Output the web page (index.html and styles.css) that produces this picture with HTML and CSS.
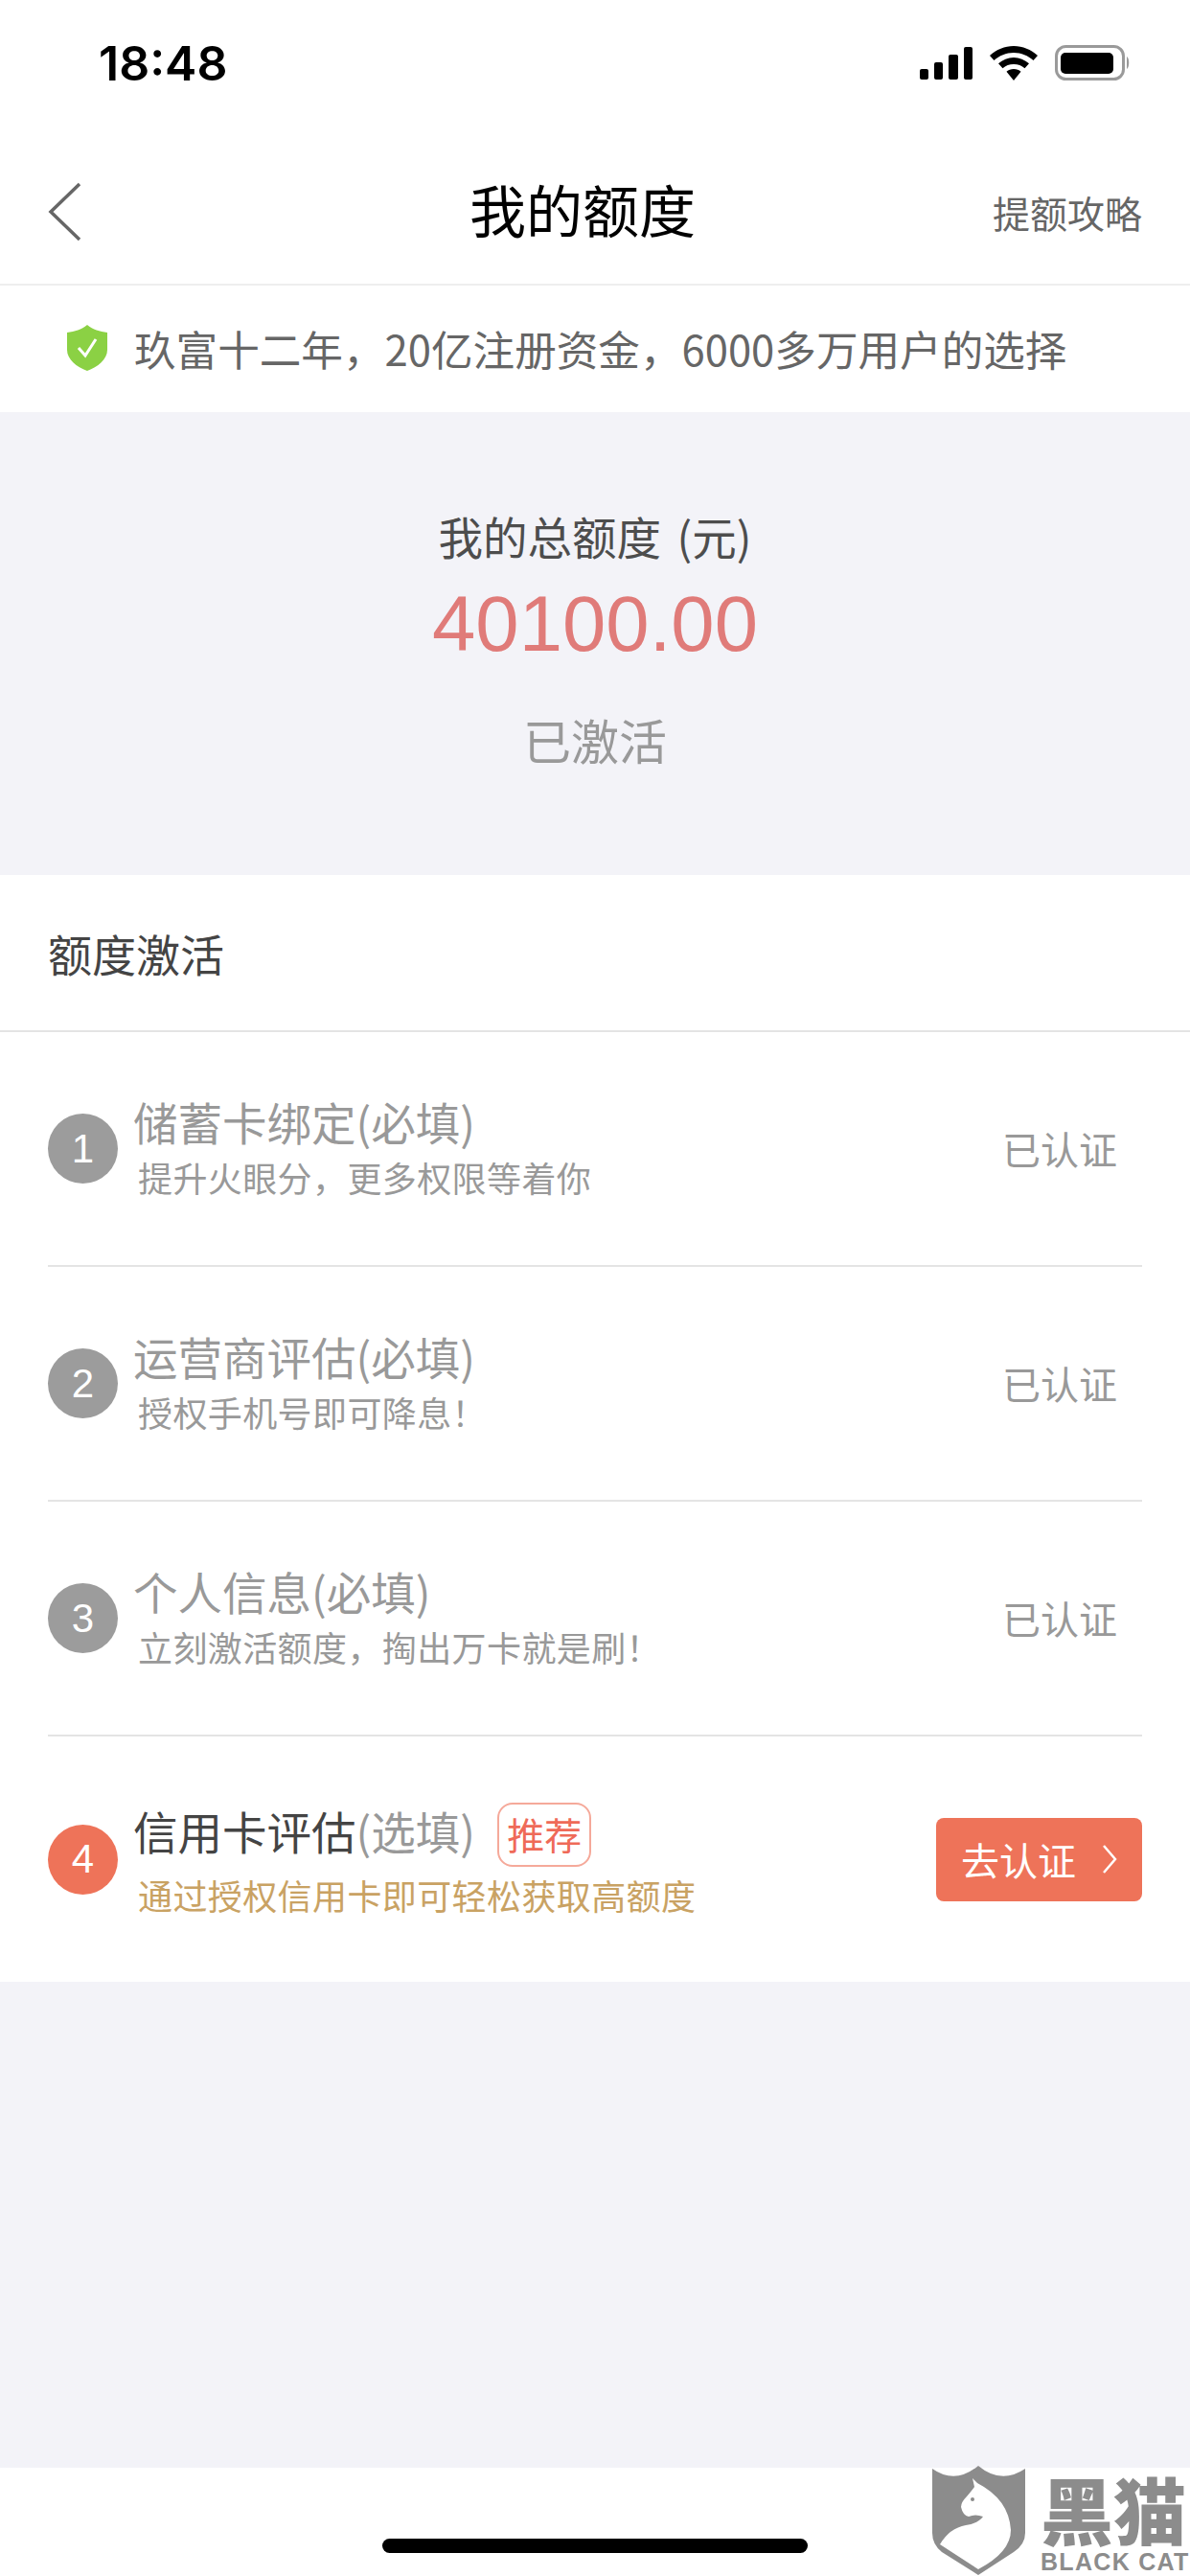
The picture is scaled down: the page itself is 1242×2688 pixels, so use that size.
FILE: index.html
```html
<!DOCTYPE html>
<html lang="zh-CN">
<head>
    <meta charset="UTF-8">
    <meta name="viewport" content="width=device-width, initial-scale=1.0">
    <title>我的额度</title>
    <link rel="stylesheet" href="styles.css">
</head>
<body>

<div class="status-bar">
    <span class="time">18:48</span>
    <div class="status-icons">
        <svg width="55" height="34" viewBox="0 0 55 34">
            <rect x="0" y="23" width="9" height="11" rx="2" fill="#000"/>
            <rect x="15" y="16" width="9" height="18" rx="2" fill="#000"/>
            <rect x="30" y="8" width="10" height="26" rx="2" fill="#000"/>
            <rect x="46" y="0" width="9" height="34" rx="2" fill="#000"/>
        </svg>
        <svg width="50" height="36" viewBox="0 0 50 36">
            <path d="M25 0C15.500 0 7 3.700 0 10L4.500 15C10 10 17 7 25 7S40 10 45.500 15L50 10C43 3.700 34.500 0 25 0Z" fill="#000"/>
            <path d="M25 12C19 12 13.500 14.300 9 18.300L13.500 23.300C16.500 20.500 20.500 19 25 19S33.500 20.500 36.500 23.300L41 18.300C36.500 14.300 31 12 25 12Z" fill="#000"/>
            <path d="M25 24C22 24 19.500 25 17.500 26.800L25 36L32.500 26.800C30.500 25 28 24 25 24Z" fill="#000"/>
        </svg>
        <svg width="79" height="37" viewBox="0 0 79 37">
            <rect x="1.500" y="1.500" width="70" height="34" rx="10" fill="none" stroke="#9a9a9a" stroke-width="3"/>
            <rect x="6" y="8" width="55" height="22" rx="5" fill="#000"/>
            <path d="M75 12C78 14 78 23 75 25Z" fill="#9a9a9a"/>
        </svg>
    </div>
</div>

<div class="nav">
    <svg class="back" width="35" height="62" viewBox="0 0 35 62">
        <path d="M33 2L3 31L33 60" fill="none" stroke="#666" stroke-width="3.500"/>
    </svg>
    <h1 class="nav-title">我的额度</h1>
    <span class="nav-link">提额攻略</span>
</div>

<div class="banner">
    <svg width="42" height="48" viewBox="0 0 42 48">
        <path d="M21 0C27 5 34 7 42 8V26C42 36 32 44 21 48C10 44 0 36 0 26V8C8 7 15 5 21 0Z" fill="#8bd144"/>
        <path d="M12 24L19 32L30 15" fill="none" stroke="#fff" stroke-width="3"/>
    </svg>
    <span>玖富十二年，20亿注册资金，6000多万用户的选择</span>
</div>

<div class="hero">
    <div class="hero-label">我的总额度 (元)</div>
    <div class="hero-amount">40100.00</div>
    <div class="hero-state">已激活</div>
</div>

<div class="panel">
    <div class="panel-title">额度激活</div>
    <div class="steps">
        <div class="step">
            <span class="step-num">1</span>
            <div class="step-text">
                <div class="step-name">储蓄卡绑定(必填)</div>
                <div class="step-desc">提升火眼分，更多权限等着你</div>
            </div>
            <span class="step-done">已认证</span>
        </div>
        <div class="step">
            <span class="step-num">2</span>
            <div class="step-text">
                <div class="step-name">运营商评估(必填)</div>
                <div class="step-desc">授权手机号即可降息！</div>
            </div>
            <span class="step-done">已认证</span>
        </div>
        <div class="step">
            <span class="step-num">3</span>
            <div class="step-text">
                <div class="step-name">个人信息(必填)</div>
                <div class="step-desc">立刻激活额度，掏出万卡就是刷！</div>
            </div>
            <span class="step-done">已认证</span>
        </div>
        <div class="step step-active">
            <span class="step-num">4</span>
            <div class="step-text">
                <div class="step-name"><b>信用卡评估</b>(选填) <span class="tag">推荐</span></div>
                <div class="step-desc">通过授权信用卡即可轻松获取高额度</div>
            </div>
            <button class="go-btn">去认证
                <svg width="16" height="30" viewBox="0 0 16 30">
                    <path d="M2 1L14 15L2 29" fill="none" stroke="#fff" stroke-width="2.500"/>
                </svg>
            </button>
        </div>
    </div>
</div>

<div class="spacer"></div>

<div class="bottom">
    <div class="home-bar"></div>
    <div class="watermark">
        <svg width="97" height="114" viewBox="0 0 97 114">
            <path d="M0 3Q24 20 48 0Q72 20 97 3V70Q97 82 85 90L48 114L10 90Q0 82 0 70Z" fill="#8c8c8c"/>
            <path d="M42 13L47 18Q80 35 82 67Q82 90 48 108L8 82Q18 65 35 62Q48 60 53 53Q45 50 38 53Q32 52 30 43Q30 38 36 32Q42 25 44 22Z" fill="#fff"/>
            <circle cx="42" cy="35" r="2" fill="#8c8c8c"/>
        </svg>
        <div class="wm-text">
            <div class="wm-cn">黑猫</div>
            <div class="wm-en">BLACK CAT</div>
        </div>
    </div>
</div>

</body>
</html>
```

FILE: styles.css
```css
* {
    box-sizing: border-box;
}
html, body {
    margin: 0;
    padding: 0;
}
body {
    width: 1242px;
    height: 2688px;
    display: flex;
    flex-direction: column;
    background-color: #f3f3f8;
    font-family: "Noto Sans CJK SC", "Liberation Sans", sans-serif;
    overflow: hidden;
}
.status-bar {
    height: 140px;
    flex: none;
    display: flex;
    justify-content: space-between;
    align-items: flex-start;
    padding: 35px 62px 0 103px;
    background-color: #fff;
}
.time {
    font-family: Inter, sans-serif;
    font-weight: 600;
    font-size: 50px;
    line-height: 62px;
    color: #000;
}
.status-icons {
    display: flex;
    align-items: center;
    gap: 18px;
    padding-top: 12px;
}
.nav {
    height: 158px;
    flex: none;
    display: flex;
    align-items: center;
    justify-content: space-between;
    padding: 0 50px;
    background-color: #fff;
    border-bottom: 2px solid #eeeeee;
    position: relative;
}
.back {
    margin-top: 6px;
}
.nav-title {
    position: absolute;
    left: 490px;
    margin: 0;
    font-size: 59px;
    font-weight: 400;
    line-height: 80px;
    color: #000;
}
.nav-link {
    margin-top: 6px;
    font-size: 39px;
    color: #666;
}
.banner {
    height: 132px;
    flex: none;
    display: flex;
    align-items: center;
    gap: 28px;
    padding-left: 70px;
    padding-bottom: 2px;
    background-color: #fff;
    font-size: 43.600px;
    color: #666;
}
.hero {
    height: 483px;
    flex: none;
    padding-top: 105px;
    text-align: center;
}
.hero-label {
    font-size: 46.500px;
    word-spacing: 6px;
    line-height: 48px;
    color: #4d4d4d;
}
.hero-amount {
    margin-top: 23px;
    font-family: "Liberation Sans", sans-serif;
    font-size: 81.500px;
    line-height: 90px;
    color: #e07b79;
}
.hero-state {
    margin-top: 47px;
    font-size: 50px;
    line-height: 56px;
    color: #999;
}
.panel {
    height: 1155px;
    flex: none;
    background-color: #fff;
}
.panel-title {
    height: 164px;
    display: flex;
    align-items: center;
    padding-left: 50px;
    font-size: 46px;
    color: #444;
    border-bottom: 2px solid #e4e4e4;
}
.steps {
    padding: 0 50px;
}
.step {
    height: 245px;
    display: flex;
    align-items: center;
    border-bottom: 2px solid #e4e4e4;
}
.step-active {
    height: 256px;
    border-bottom: none;
}
.step-num {
    width: 73px;
    height: 73px;
    flex: none;
    border-radius: 50%;
    display: flex;
    align-items: center;
    justify-content: center;
    background-color: #9c9c9c;
    color: #fff;
    font-family: "Liberation Sans", sans-serif;
    font-size: 42px;
}
.step-active .step-num {
    background-color: #ee7359;
}
.step-text {
    flex: 1;
    margin-left: 16px;
    padding-bottom: 5px;
}
.step-name {
    font-size: 46.500px;
    line-height: 56px;
    color: #999;
}
.step-name b {
    font-weight: 400;
    color: #444;
}
.step-desc {
    margin-top: 7px;
    margin-left: 5px;
    font-size: 36px;
    letter-spacing: 0.400px;
    line-height: 46px;
    color: #999;
}
.step-active .step-text {
    padding-bottom: 0;
}
.step-active .step-desc {
    margin-top: 0;
    color: #c9a263;
}
.step-done {
    margin-right: 26px;
    margin-bottom: 2px;
    font-size: 40px;
    color: #999;
}
.tag {
    display: inline-block;
    width: 98px;
    height: 67px;
    margin-left: 13px;
    margin-bottom: 6px;
    border: 2px solid #f5a99a;
    border-radius: 16px;
    text-align: center;
    font-size: 39px;
    line-height: 61px;
    color: #ef6a58;
    vertical-align: middle;
}
.go-btn {
    width: 215px;
    height: 87px;
    flex: none;
    display: flex;
    align-items: center;
    justify-content: space-between;
    padding: 0 26px 0 26px;
    border: none;
    border-radius: 8px;
    background-color: #ee7359;
    color: #fff;
    font-family: inherit;
    font-size: 40px;
}
.spacer {
    flex: 1;
}
.bottom {
    height: 113px;
    flex: none;
    background-color: #fff;
    position: relative;
}
.home-bar {
    position: absolute;
    left: 399px;
    top: 74px;
    width: 444px;
    height: 15px;
    border-radius: 8px;
    background-color: #000;
}
.watermark {
    position: absolute;
    left: 973px;
    top: -2px;
    width: 269px;
    display: flex;
    gap: 16px;
}
.wm-text {
    color: #8c8c8c;
}
.wm-cn {
    height: 84px;
    margin-top: 2px;
    font-size: 76px;
    font-weight: 900;
    line-height: 84px;
    white-space: nowrap;
}
.wm-en {
    font-family: "Liberation Sans", sans-serif;
    font-weight: 700;
    font-size: 25px;
    letter-spacing: 1.300px;
    line-height: 28px;
    white-space: nowrap;
}
```
